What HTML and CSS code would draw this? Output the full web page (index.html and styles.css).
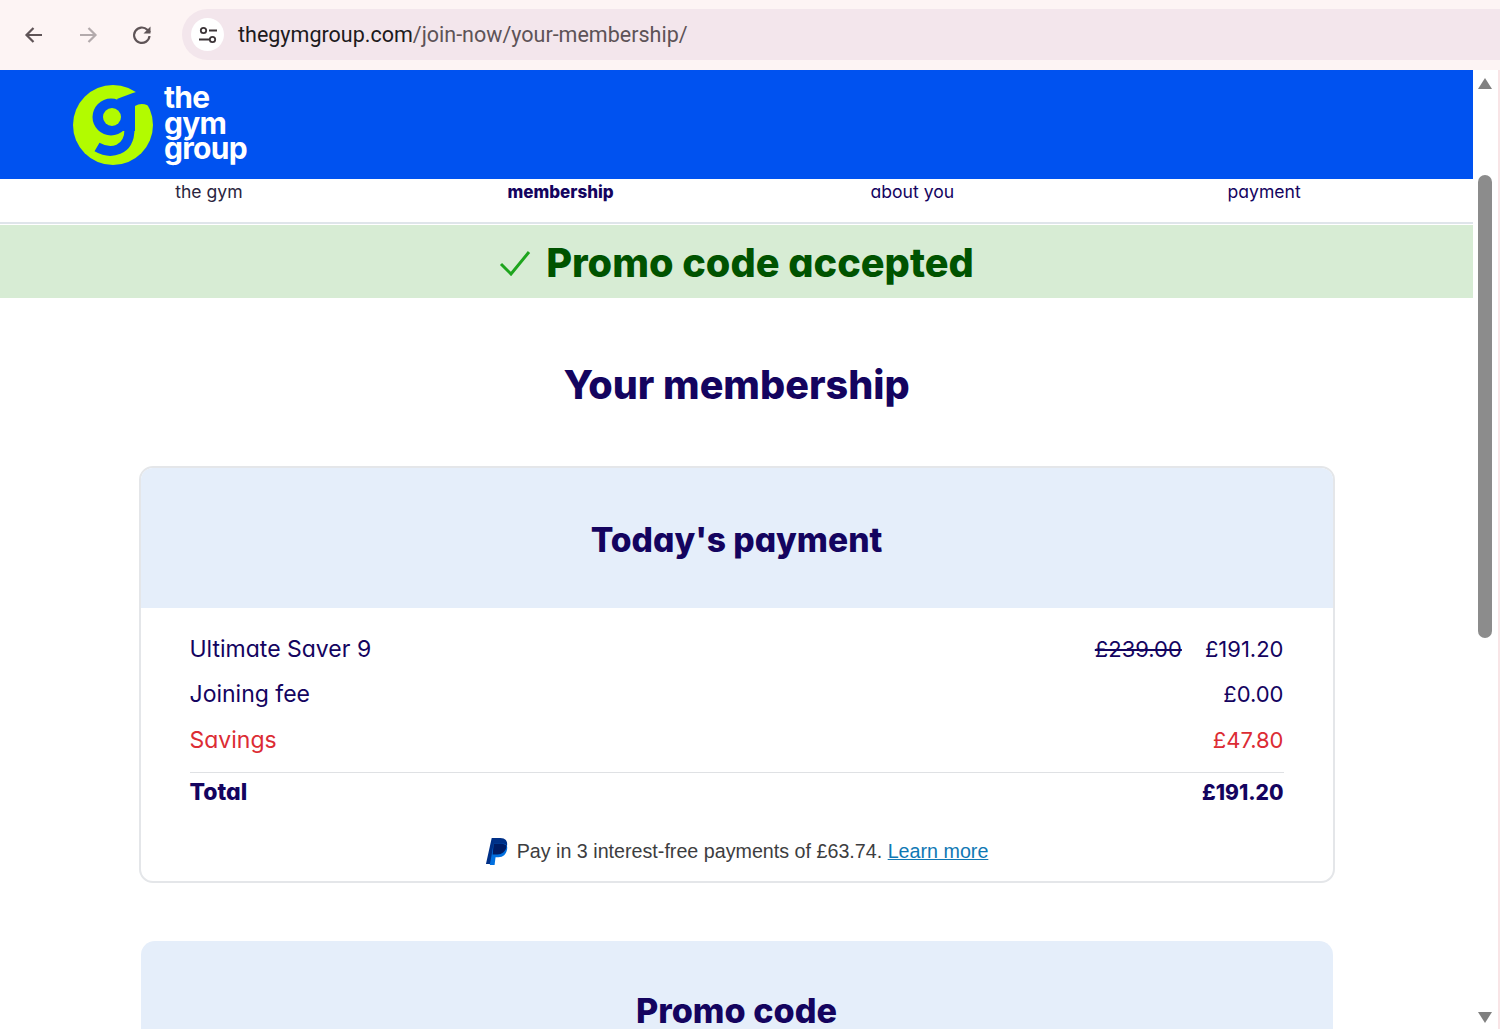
FILE: index.html
```html
<!DOCTYPE html>
<html lang="en">

<head>
    <meta charset="UTF-8">
    <title>Your membership</title>
    <link rel="stylesheet" href="styles.css">
</head>

<body>
    <div class="browser-bar">
        <svg class="nav-icon" viewBox="0 0 24 24"><path d="M20 12H5M11.500 5L4.500 12l7 7" fill="none" stroke="#5f5457" stroke-width="2.200"/></svg>
        <svg class="nav-icon" viewBox="0 0 24 24"><path d="M4 12h15M12.500 5l7 7-7 7" fill="none" stroke="#b3aaac" stroke-width="2.200"/></svg>
        <svg class="nav-icon" viewBox="0 0 24 24"><path d="M19.500 13a7.700 7.700 0 1 1-2.200-6.200L20 9.400" fill="none" stroke="#5f5457" stroke-width="2.200"/><path d="M20.500 3.500v7h-7z" fill="#5f5457"/></svg>
        <div class="omnibox">
            <span class="site-icon">
                <svg viewBox="0 0 24 24" width="24" height="24"><g fill="none" stroke="#3c3538" stroke-width="1.800"><circle cx="7.500" cy="7.500" r="2.700"/><circle cx="16.500" cy="16.500" r="2.700"/><path d="M13 7.500h8M3 16.500h10"/></g></svg>
            </span>
            <span class="url">thegymgroup.com<span class="url-path">/join-now/your-membership/</span></span>
        </div>
    </div>

    <div class="viewport">
        <div class="page">
            <header class="top-band">
                <svg class="logo-mark" viewBox="0 0 80 80">
                    <ellipse cx="40" cy="40" rx="40" ry="40" fill="#b2fb00"/>
                    <path d="M44 14 C51 11 57 9 63 7 H82 V26 C76 19 68 17 62 21 V30 H50 Z" fill="#0052f0"/>
                    <circle cx="38" cy="32" r="18.500" fill="#0052f0"/>
                    <circle cx="39" cy="32" r="9" fill="#b2fb00"/>
                    <path d="M56 18 V46" fill="none" stroke="#0052f0" stroke-width="12"/>
                    <path d="M56.500 44 C56.500 66 38 70 24 62" fill="none" stroke="#0052f0" stroke-width="10"/>
                </svg>
                <div class="logo-text">the<br>gym<br>group</div>
            </header>

            <nav class="steps">
                <span class="step step-first">the gym</span>
                <span class="step step-active">membership</span>
                <span class="step">about you</span>
                <span class="step">payment</span>
            </nav>

            <div class="promo-banner">
                <svg class="tick" viewBox="0 0 32 26"><path d="M2 14l10 10L30 2" fill="none" stroke="#1ea51e" stroke-width="3"/></svg>
                <span>Promo code accepted</span>
            </div>

            <h1>Your membership</h1>

            <section class="card">
                <h2 class="card-title">Today's payment</h2>
                <div class="card-body">
                    <div class="row">
                        <span>Ultimate Saver 9</span>
                        <span class="prices"><s>£239.00</s><span>£191.20</span></span>
                    </div>
                    <div class="row">
                        <span>Joining fee</span>
                        <span class="amount">£0.00</span>
                    </div>
                    <div class="row row-savings">
                        <span>Savings</span>
                        <span class="amount">£47.80</span>
                    </div>
                    <div class="row row-total">
                        <span>Total</span>
                        <span class="amount">£191.20</span>
                    </div>
                    <div class="paypal-line">
                        <svg class="paypal-icon" viewBox="0 0 24 30">
                            <path d="M7 1h9c5 0 8 3 7 8-1 6-5 9-10 9H9l-2 10H1z" fill="#003087"/>
                            <path d="M9 7h9c4 0 6 2 5 6-1 5-4 8-9 8h-3l-1 8H5z" fill="#0070e0"/>
                            <path d="M9 7h8c3 0 5 1 5.500 3-1 5-5 8-9.500 8H9.500L8 18z" fill="#001c64"/>
                        </svg>
                        <span>Pay in 3 interest-free payments of £63.74. <a href="#">Learn more</a></span>
                    </div>
                </div>
            </section>

            <section class="card card-plain">
                <h2 class="card-title">Promo code</h2>
            </section>
        </div>

        <div class="scrollbar">
            <span class="arrow-up"></span>
            <span class="thumb"></span>
            <span class="arrow-down"></span>
        </div>
    </div>
</body>

</html>
```

FILE: styles.css
```css
html, body {
    margin: 0;
    height: 1029px;
    overflow: hidden;
    background-color: #fff;
}

body {
    font-family: 'Inter', 'Liberation Sans', sans-serif;
    font-feature-settings: 'cv11';
    color: #14045f;
}

.browser-bar {
    height: 70px;
    box-sizing: border-box;
    padding: 9px 0 10px 22px;
    display: flex;
    align-items: center;
    background-color: #fdf4f4;
}

.nav-icon {
    width: 24px;
    height: 24px;
    margin-right: 30px;
}

.nav-icon:nth-child(3) {
    margin-right: 28px;
}

.omnibox {
    flex: 1;
    height: 51px;
    display: flex;
    align-items: center;
    padding-left: 9px;
    border-radius: 26px 0 0 26px;
    background-color: #f3e6ec;
}

.site-icon {
    width: 33px;
    height: 33px;
    margin-right: 14px;
    display: flex;
    align-items: center;
    justify-content: center;
    border-radius: 50%;
    background-color: #fff;
}

.url {
    font-family: 'Roboto', sans-serif;
    font-size: 21.500px;
    color: #201a1c;
}

.url-path {
    color: #5d5357;
}

.viewport {
    display: flex;
    height: 959px;
}

.page {
    flex: 1;
    min-width: 0;
    overflow: hidden;
}

.top-band {
    height: 109px;
    padding: 15px 0 0 73px;
    box-sizing: border-box;
    display: flex;
    gap: 11px;
    background-color: #0052f0;
}

.logo-mark {
    width: 80px;
    height: 80px;
}

.logo-text {
    font-size: 30px;
    font-weight: 700;
    line-height: 25.500px;
    letter-spacing: -0.700px;
    color: #fff;
}

.steps {
    height: 45px;
    box-sizing: border-box;
    padding: 0 33px;
    display: grid;
    grid-template-columns: repeat(4, 1fr);
    font-size: 17.600px;
    line-height: 26px;
    text-align: center;
    border-bottom: 2px solid #dfe5ea;
}

.step-first {
    color: #2b2540;
}

.step-active {
    font-size: 17px;
    font-weight: 800;
}

.promo-banner {
    margin-top: 1px;
    height: 73px;
    padding-top: 2px;
    box-sizing: border-box;
    display: flex;
    align-items: center;
    justify-content: center;
    gap: 15px;
    font-size: 39.700px;
    font-weight: 800;
    color: #005300;
    background-color: #d7ecd4;
}

.tick {
    width: 32px;
    height: 26px;
}

h1 {
    margin: 57px 0 0;
    font-size: 39.500px;
    font-weight: 800;
    line-height: 60px;
    text-align: center;
}

.card {
    width: 1192px;
    margin: 51px auto 0;
    border: 2px solid #e4e6e9;
    border-radius: 14px;
    overflow: hidden;
}

.card-title {
    margin: 0;
    height: 140px;
    padding-top: 3px;
    box-sizing: border-box;
    display: flex;
    align-items: center;
    justify-content: center;
    font-size: 33.600px;
    font-weight: 800;
    background-color: #e5eefa;
}

.card-body {
    padding: 18px 49px 0 49px;
    height: 273px;
    box-sizing: border-box;
}

.row {
    height: 45.500px;
    display: flex;
    align-items: center;
    justify-content: space-between;
    font-size: 23px;
}

.prices, .amount {
    font-size: 22px;
}

.prices {
    display: flex;
    gap: 23px;
}

.row-savings {
    color: #dc2c34;
}

.row-total {
    margin-top: 9px;
    height: 39px;
    border-top: 1px solid #dfe1e4;
    font-weight: 800;
}

.row-total .amount {
    font-size: 21px;
}

.paypal-line {
    margin-top: 25px;
    display: flex;
    align-items: center;
    justify-content: center;
    gap: 9px;
    font-family: 'Liberation Sans', sans-serif;
    font-size: 19.700px;
    color: #3d3d40;
}

.paypal-line a {
    color: #0f78b4;
}

.paypal-icon {
    width: 23px;
    height: 29px;
}

.card-plain {
    margin-top: 58px;
    border: 0;
    border-radius: 14px 14px 0 0;
}

.card-plain .card-title {
    height: 138px;
    padding-top: 0;
    font-size: 34.200px;
}

.scrollbar {
    width: 27px;
    box-sizing: border-box;
    position: relative;
    background-color: #fff;
    border-right: 2px solid #f8e4e6;
}

.arrow-up {
    position: absolute;
    top: 8px;
    left: 5px;
    border-left: 7px solid transparent;
    border-right: 7px solid transparent;
    border-bottom: 11px solid #808080;
}

.arrow-down {
    position: absolute;
    bottom: 6px;
    left: 5px;
    border-left: 7px solid transparent;
    border-right: 7px solid transparent;
    border-top: 11px solid #808080;
}

.thumb {
    position: absolute;
    top: 105px;
    left: 5px;
    width: 14px;
    height: 463px;
    border-radius: 7px;
    background-color: #8c8c8c;
}
```
